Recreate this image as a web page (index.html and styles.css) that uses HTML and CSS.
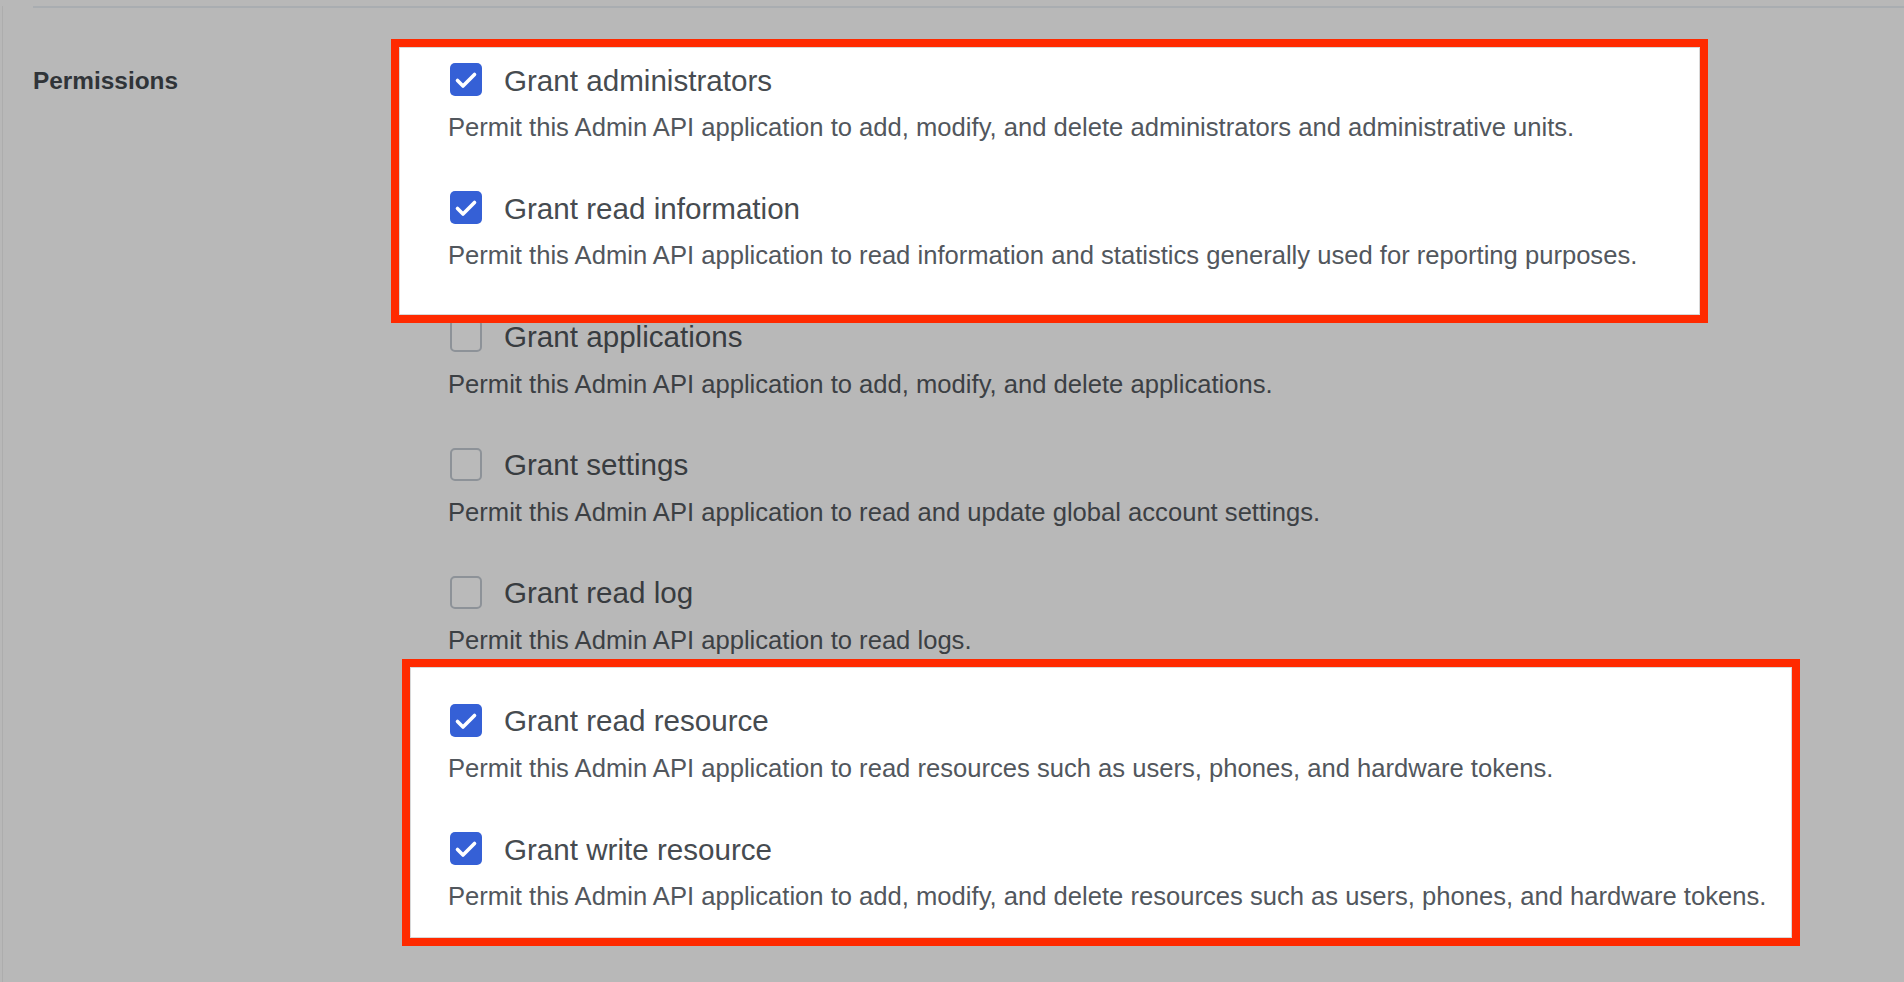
FILE: index.html
```html
<!DOCTYPE html>
<html lang="en">
<head>
<meta charset="utf-8">
<title>Permissions</title>
<link rel="stylesheet" href="styles.css">
</head>
<body>
<div class="page">
  <div class="divider"></div>
  <section class="field">
    <div class="field-label">Permissions</div>
    <div class="perm-list">
      <div class="highlight hl-a">
        <div class="perm">
          <div class="perm-head">
            <span class="box checked"><svg viewBox="0 0 32 33" width="32" height="33"><polyline points="7.5,17.5 13,23 24.5,11.5" fill="none" stroke="#fff" stroke-width="3.6" stroke-linecap="round" stroke-linejoin="round"/></svg></span>
            <span class="perm-name">Grant administrators</span>
          </div>
          <div class="perm-desc">Permit this Admin API application to add, modify, and delete administrators and administrative units.</div>
        </div>
        <div class="perm">
          <div class="perm-head">
            <span class="box checked"><svg viewBox="0 0 32 33" width="32" height="33"><polyline points="7.5,17.5 13,23 24.5,11.5" fill="none" stroke="#fff" stroke-width="3.6" stroke-linecap="round" stroke-linejoin="round"/></svg></span>
            <span class="perm-name">Grant read information</span>
          </div>
          <div class="perm-desc">Permit this Admin API application to read information and statistics generally used for reporting purposes.</div>
        </div>
      </div>
      <div class="perm">
        <div class="perm-head">
          <span class="box"></span>
          <span class="perm-name">Grant applications</span>
        </div>
        <div class="perm-desc">Permit this Admin API application to add, modify, and delete applications.</div>
      </div>
      <div class="perm">
        <div class="perm-head">
          <span class="box"></span>
          <span class="perm-name">Grant settings</span>
        </div>
        <div class="perm-desc">Permit this Admin API application to read and update global account settings.</div>
      </div>
      <div class="perm">
        <div class="perm-head">
          <span class="box"></span>
          <span class="perm-name">Grant read log</span>
        </div>
        <div class="perm-desc">Permit this Admin API application to read logs.</div>
      </div>
      <div class="highlight hl-b">
        <div class="perm">
          <div class="perm-head">
            <span class="box checked"><svg viewBox="0 0 32 33" width="32" height="33"><polyline points="7.5,17.5 13,23 24.5,11.5" fill="none" stroke="#fff" stroke-width="3.6" stroke-linecap="round" stroke-linejoin="round"/></svg></span>
            <span class="perm-name">Grant read resource</span>
          </div>
          <div class="perm-desc">Permit this Admin API application to read resources such as users, phones, and hardware tokens.</div>
        </div>
        <div class="perm">
          <div class="perm-head">
            <span class="box checked"><svg viewBox="0 0 32 33" width="32" height="33"><polyline points="7.5,17.5 13,23 24.5,11.5" fill="none" stroke="#fff" stroke-width="3.6" stroke-linecap="round" stroke-linejoin="round"/></svg></span>
            <span class="perm-name">Grant write resource</span>
          </div>
          <div class="perm-desc">Permit this Admin API application to add, modify, and delete resources such as users, phones, and hardware tokens.</div>
        </div>
      </div>
    </div>
  </section>
</div>
</body>
</html>
```

FILE: styles.css
```css
html {
  background: #b8b8b8;
}
body {
  margin: 0;
  padding-left: 2px;
  font-family: "Liberation Sans", Arial, Helvetica, sans-serif;
  color: #35393d;
}
.page {
  min-height: 982px;
  border-left: 1px solid #adadad;
  box-sizing: border-box;
}
.divider {
  margin: 6px 0 0 30px;
  height: 2px;
  background: #a9adb1;
}
.field {
  display: flex;
  margin-top: 31px;
}
.field-label {
  width: 447px;
  flex: none;
  box-sizing: border-box;
  padding-left: 30px;
  margin-top: 27px;
  font-size: 24.4px;
  line-height: 30px;
  font-weight: bold;
  color: #303438;
  height: 30px;
}
.perm-list {
  flex: 1;
  display: flex;
  flex-direction: column;
}
.perm-head {
  display: flex;
  align-items: center;
  gap: 22px;
  height: 33px;
}
.box {
  flex: none;
  width: 32px;
  height: 33px;
  box-sizing: border-box;
  border-radius: 5px;
  border: 2px solid #8d9298;
  background: #bababa;
}
.box.checked {
  border: none;
  background: #3560d6;
}
.box svg {
  display: block;
}
.perm-name {
  font-size: 29.6px;
  line-height: 33px;
  padding-top: 1px;
  color: #383c40;
}
.perm-desc {
  margin-top: 16.2px;
  margin-left: -2px;
  font-size: 25.6px;
  line-height: 30px;
  color: #3c4044;
  white-space: nowrap;
}
.perm + .perm {
  margin-top: 49px;
}
.highlight {
  position: relative;
  z-index: 1;
  background: #fff;
  border: 8px solid #ff2a00;
  box-shadow: inset 0 0 0 1px #d8d8d8;
}
.highlight .perm-name {
  color: #464b50;
}
.highlight .perm-desc {
  color: #52575d;
}
.hl-a {
  margin: 0 196px -3.6px -59px;
  padding: 16px 0 44.6px 51px;
}
.hl-b {
  margin: 4px 104px 0 -48px;
  padding: 37px 0 26.6px 40px;
}
```
